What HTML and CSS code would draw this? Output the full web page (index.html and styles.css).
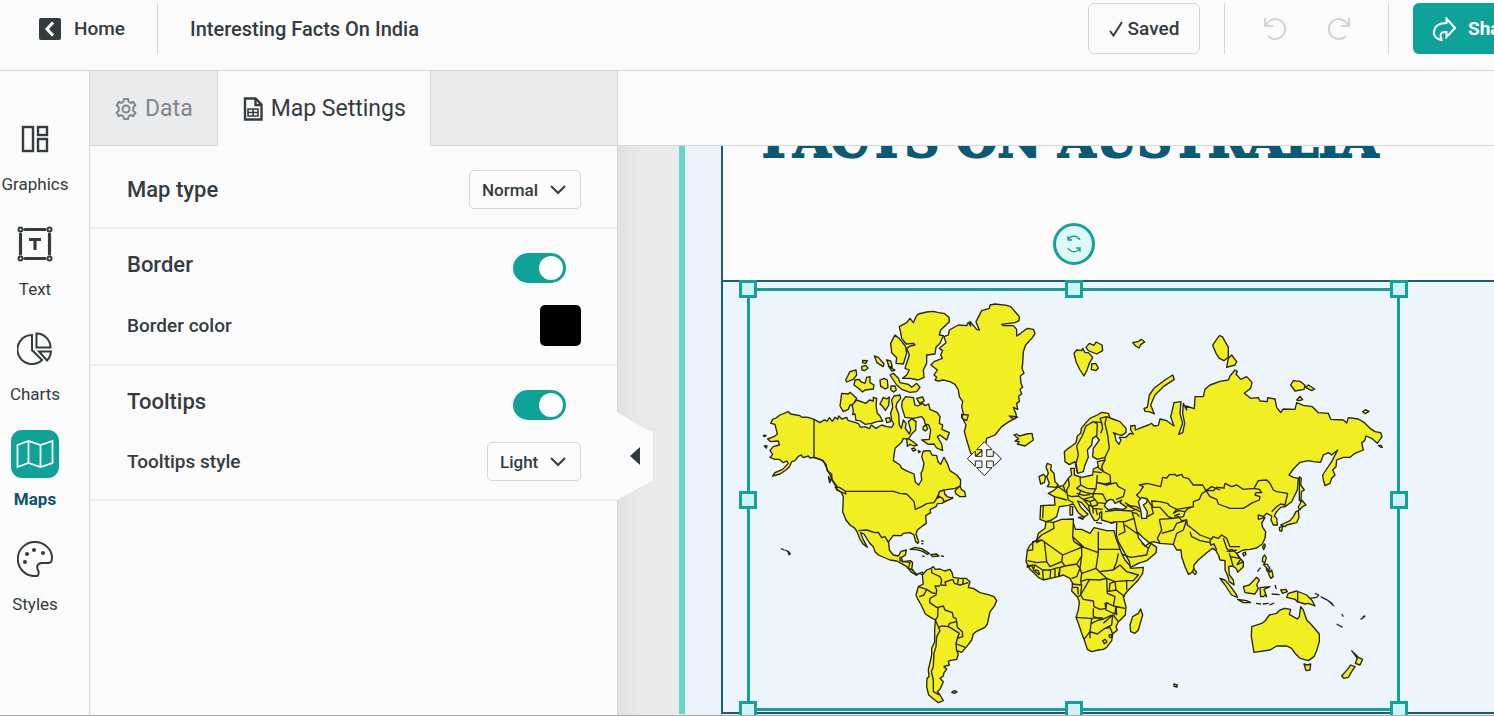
FILE: index.html
```html
<!DOCTYPE html>
<html lang="en">
<head>
  <meta charset="utf-8">
  <title>Interesting Facts On India</title>
  <link rel="stylesheet" href="styles.css">
</head>
<body>

<!-- Top bar -->
<header class="topbar">
  <a class="home" href="#">
    <svg width="22" height="22" viewBox="0 0 22 22"><rect width="22" height="22" rx="2" fill="#343c3f"/><path d="M14 4.500L8 11l6 6.500" fill="none" stroke="#fff" stroke-width="3"/></svg>
    Home
  </a>
  <span class="divider"></span>
  <span class="doc-title">Interesting Facts On India</span>
  <div class="actions">
    <button class="saved"><svg width="14" height="16" viewBox="0 0 14 16"><path d="M1 10l3.500 4.500L13 1" fill="none" stroke="currentColor" stroke-width="2"/></svg>Saved</button>
    <span class="divider"></span>
    <div class="history">
      <button class="icon-btn" aria-label="Undo"><svg width="24" height="24" viewBox="0 0 24 24"><path d="M2 1v8h8M3 8a10 10 0 1 1 2 11" /></svg></button>
      <button class="icon-btn" aria-label="Redo"><svg width="24" height="24" viewBox="0 0 24 24"><path d="M22 1v8h-8M21 8a10 10 0 1 0-2 11" /></svg></button>
    </div>
    <span class="divider"></span>
    <button class="share"><svg width="24" height="24" viewBox="0 0 24 24"><path d="M14.500 1.500l8.500 9.500-8.500 9v-5c-4-.5-6 1-6 4l1 4C4 22 1 18 2 14c1-5 5-8 12.500-8z"/></svg>Share</button>
  </div>
</header>

<main class="editor">
  <!-- Tool sidebar -->
  <nav class="sidebar">
    <a class="tool" href="#">
      <span class="tool-icon"><svg width="36" height="36" viewBox="0 0 36 36" stroke-width="2.400"><rect x="6" y="6" width="10" height="24"/><rect x="21" y="6" width="9" height="8"/><rect x="21" y="18" width="9" height="12"/></svg></span>
      Graphics
    </a>
    <a class="tool" href="#">
      <span class="tool-icon"><svg width="36" height="36" viewBox="0 0 36 36" stroke-width="3.200"><path d="M8 3.500h20M8 32.500h20M3.500 8v20M32.500 8v20" stroke-linecap="round"/><g stroke-width="2" fill="#fbfbfb"><circle cx="3.500" cy="3.500" r="2"/><circle cx="32.500" cy="3.500" r="2"/><circle cx="3.500" cy="32.500" r="2"/><circle cx="32.500" cy="32.500" r="2"/></g><path d="M12 13.500h12M18 13v11"/></svg></span>
      Text
    </a>
    <a class="tool" href="#">
      <span class="tool-icon"><svg width="36" height="36" viewBox="0 0 36 36" stroke-width="2"><path d="M15 4A14.500 14.500 0 1 0 25 29L15 19z"/><path d="M19.500 2.500a14 14 0 0 1 14 14h-14zM22 20.500h12a14 14 0 0 1-4 9z"/></svg></span>
      Charts
    </a>
    <a class="tool active" href="#">
      <span class="tool-icon"><svg width="38" height="30" viewBox="0 0 38 30" stroke-width="1.800"><path d="M1.500 6l11-4 12 4 12-4v22l-12 4-12-4-11 4zM12.500 2v22M24.500 6v22"/></svg></span>
      Maps
    </a>
    <a class="tool" href="#">
      <span class="tool-icon"><svg width="36" height="36" viewBox="0 0 36 36" stroke-width="2"><path d="M20 35C8 36 .8 27 .8 18A17 17 0 0 1 18 1c9 0 17 7 17 16 0 5-2 5-5 5h-5c-4 0-6 3-4 7 1 2 1 5-1 6z"/><g fill="#343c3f" stroke="none"><circle cx="8" cy="21" r="2"/><circle cx="10" cy="13" r="2"/><circle cx="17" cy="9" r="2"/><circle cx="26" cy="12" r="2"/></g></svg></span>
      Styles
    </a>
  </nav>

  <!-- Map settings -->
  <aside class="panel">
    <div class="tabs">
      <button class="tab"><svg width="22" height="22" viewBox="0 0 22 22"><path d="M9 1h4l.6 2.700 2 1.100L18.300 4l2 3.400-2 1.900v3.400l2 1.900-2 3.400-2.700-.8-2 1.100L13 21H9l-.6-2.700-2-1.100-2.700.8-2-3.400 2-1.900V9.300l-2-1.900L3.700 4l2.700.8 2-1.100z"/><circle cx="11" cy="11" r="3.500"/></svg>Data</button>
      <button class="tab active"><svg width="20" height="24" viewBox="0 0 20 24"><path d="M2 1.500h10.500l6 6v15H2zM12.500 2v6h6"/><path d="M5 12h10v7H5zM5 15.500h10M10 12v7" stroke-width="1.600"/></svg>Map Settings</button>
    </div>
    <section class="group">
      <div class="row">
        <label class="title" for="mapType">Map type</label>
        <span class="select normal">
          <select id="mapType"><option>Normal</option><option>Satellite</option></select>
          <svg width="16" height="10" viewBox="0 0 16 10"><path d="M1 1l7 7 7-7"/></svg>
        </span>
      </div>
    </section>
    <section class="group">
      <div class="row switch-row">
        <label class="title" for="border">Border</label>
        <input class="switch" type="checkbox" id="border" checked>
      </div>
      <div class="row">
        <label for="borderColor">Border color</label>
        <input class="swatch" type="color" id="borderColor" value="#000000">
      </div>
    </section>
    <section class="group">
      <div class="row switch-row">
        <label class="title" for="tooltips">Tooltips</label>
        <input class="switch" type="checkbox" id="tooltips" checked>
      </div>
      <div class="row">
        <label for="tooltipStyle">Tooltips style</label>
        <span class="select light">
          <select id="tooltipStyle"><option>Light</option><option>Dark</option></select>
          <svg width="16" height="10" viewBox="0 0 16 10"><path d="M1 1l7 7 7-7"/></svg>
        </span>
      </div>
    </section>
    <button class="collapse" aria-label="Collapse panel"><svg width="10" height="18" viewBox="0 0 10 18"><path d="M10 0v18L0 9z" fill="#343c3f"/></svg></button>
  </aside>

  <!-- Canvas -->
  <div class="canvas">
    <div class="canvas-bar"></div>
    <div class="workspace">
      <div class="sheet">
        <div class="sheet-head"><h1>FACTS ON AUSTRALIA</h1></div>
        <div class="sheet-map">
          <div class="selection">
            <svg class="map" viewBox="2241 864 1959 1269">
              <g class="land">
                <!-- North America, Greenland, Iceland -->
                <g transform="translate(2220 870)">
                  <path d="M105 403L92 400 98 388 108 384 120 375 145 365 152 372 180 377 185 381 205 382 222 388 240 398 252 390 262 393 268 383 277 394 285 382 293 388 296 378 306 387 320 382 324 391 345 397 355 401 362 412 375 410 388 416 394 405 408 415 425 405 440 410 455 412 461 402 455 390 452 370 458 352 455 330 462 318 480 315 482 325 470 340 468 352 476 372 478 405 484 415 490 390 498 400 496 415 508 432 512 420 505 395 515 386 528 395 527 420 515 432 505 448 490 445 485 457 465 475 460 512 480 525 485 535 505 545 522 552 526 576 536 585 545 570 543 550 548 540 552 520 545 500 550 483 570 482 576 495 590 497 594 515 602 523 612 502 622 520 630 542 650 555 662 570 661 588 645 595 620 599 600 604 590 625 602 612 618 615 614 626 638 622 625 630 605 640 592 641 588 650 570 659 572 668 557 677 559 700 550 706 532 720 528 732 536 755 534 760 527 755 522 735 510 728 490 730 484 737 460 736 446 755 448 780 460 795 475 798 483 784 499 780 496 795 484 803 488 815 512 812 518 818 515 838 530 853 548 846 549 855 538 850 530 856 512 845 500 830 485 821 470 813 450 810 415 795 405 785 400 770 388 758 372 732 362 728 368 745 382 772 370 763 360 748 352 727 345 715 330 705 318 690 308 665 310 620 303 606 290 600 288 590 276 570 275 552 262 543 258 523 245 510 222 502 210 504 205 498 190 503 183 495 174 500 165 512 155 515 148 530 138 540 120 552 98 558 105 548 128 538 145 520 140 513 130 518 118 508 105 508 90 502 98 493 90 482 100 470 118 465 115 453 92 455 83 447 102 440 112 432z"/>
                  <path class="line" d="M222 388V502L250 512 265 545 280 575 295 594 310 604H460L480 610 500 612 510 622 522 635 526 658 545 650 560 641 582 638 590 625 602 620M355 722L380 720 405 728 415 727 425 743 435 740 445 757M480 800V812L490 815 510 817 505 835 520 840"/>
                  <path d="M285 592L298 592 315 603 318 612 300 605zM265 560l8 10-4 8zM645 602L660 588 664 598 674 605 677 620 660 620 648 612zM598 605L612 600 614 612 622 620 638 625 612 635 608 625 595 618z"/>
                  <path d="M718 120L708 95 725 62 748 55 750 45 765 42 800 46 812 50 838 80 837 92 825 98 785 103 790 107 820 107 830 118 830 138 842 130 862 115 880 118 885 130 878 142 857 165 850 185 848 220 846 235 852 250 841 258 843 280 848 292 840 298 845 312 836 318 838 335 830 340 833 358 820 352 829 375 826 385 808 394 785 410 765 435 740 445 735 475 705 500 692 490 680 450 673 425 678 405 666 382 670 370 665 350 668 335 658 320 655 300 645 283 630 275 610 270 595 273 585 270 590 262 582 255 592 240 573 225 582 215 607 205 602 195 608 182 598 175 618 158 612 140 625 135 628 120 655 105 680 107 685 97 692 108 690 94 710 118zM665 373l20 2-5 17-15-8zM808 378l25 3-13 7z"/>
                  <path d="M478 110L500 98 510 85 520 98 528 80 535 72 560 66 580 64 595 68 612 70 627 82 628 95 602 120 598 135 610 137 600 160 588 172 585 192 560 195 560 220 550 240 552 262 535 270 510 265 488 265 500 255 508 240 495 235 498 225 508 195 500 175 510 168 525 165 520 160 498 162 485 145 482 128z"/>
                  <path d="M452 160L458 148 465 135 480 148 497 170 500 190 490 222 468 220 470 203 455 188zM450 255L460 250 475 265 480 278 505 283 515 292 530 280 540 292 530 305 510 307 485 298 470 285zM420 270l12-5 10 5 2 22-8 5-14-8zM453 288l12 0 4 12-8 6-9-7zM440 210l12 3 5 18-10-2zM445 228l12 8 8 4-10 3zM403 198l12 4 17 20-3 8-18-12zM368 211l14 1-5 8-9-2zM365 230l12-4 7 8-10 8-8-2zM317 270L330 245 348 240 350 255 340 268 320 276zM342 285L345 270 358 268 362 275 375 280 380 262 390 260 390 278 402 285 400 297 375 300 368 306 355 295z"/>
                  <path d="M305 310L325 312 330 307 350 325 338 345 330 345 325 358 310 365 300 348zM336 345L350 330 378 340 388 330 400 333 400 322 410 325 408 348 412 370 420 378 428 393 410 395 395 400 375 403 360 392 348 391 345 372 338 374 340 362zM420 342l10-20 10 5 8-6-2 25-10 15-8-12zM437 385l12-2 3 12-12 3z"/>
                  <path d="M485 350L487 333 497 320 520 323 525 345 533 348 548 340 555 347 566 342 570 358 592 368 600 380 598 400 608 405 606 418 628 428 620 450 600 435 592 440 605 462 608 482 590 474 582 462 565 463 545 450 568 448 572 420 566 405 555 402 553 390 545 380 520 385 495 382zM530 325l18-4 5 12-14 7zM550 410l8-5 5 12-7 6-7-5zM500 445l12 5 20 15-10 3-12-5-8 6zM515 476l8-2 4 7-8 2zM535 482l6 3-5 3z"/>
                  <path d="M822 435L830 432 838 438 850 435 860 432 876 430 880 450 855 468 832 462 838 455 825 453 836 446zM70 437l4-2 4 2-5 3zM73 468l8-1-2 7z"/>
                </g>
                <!-- South America and the Caribbean -->
                <g transform="translate(2220 1440)">
                  <path d="M123 206l10 4M134 210l12 5 5 7-4 2-3-8M510 208L525 202 545 206 568 220 562 223 548 214 530 209zM572 224L590 222 597 228 578 230zM547 228l7 2M603 228l9 1M543 182l8 2M544 190l6 2"/>
                  <path d="M548 295L547 285 560 270 573 265 580 260 586 268 600 267 614 273 630 268 636 278 640 292 660 295 678 295 690 305 685 323 700 325 720 338 745 344 762 350 770 362 762 380 750 395 742 432 735 442 708 455 700 462 695 480 680 500 665 517 650 512 655 522 650 538 632 541 625 544 628 555 612 560 620 568 612 578 610 588 600 595 610 605 600 628 592 635 600 645 610 662 595 668 580 656 566 645 560 620 561 595 567 590 565 570 575 525 575 505 584 485 584 450 586 420 572 412 556 402 545 378 532 355 528 345 535 320 550 312z"/>
                  <path class="line" d="M575 268L575 278 583 282 600 290 605 300 602 315 618 316 615 306 638 298M600 318L585 318 590 330 588 345 570 355 569 368 590 382 594 382 593 410 586 420 595 440 600 452 590 470 588 500 582 520 580 560 574 575 580 600 580 635 598 645M535 320L560 328 575 338 586 340M560 328L552 345 538 350M594 382L610 378 615 390 637 398 640 412 648 415 650 425 652 442 667 455 668 470 652 475 658 460 635 445 625 440 628 430 650 425M597 442L605 438 625 440M652 475L648 492 650 512M650 492L670 500 675 502M638 298L643 310 660 315 685 308M655 296L653 310M670 296L668 314"/>
                  <path d="M635 637l8-5 8 3-7 5z"/>
                </g>
                <!-- Europe and Asia -->
                <g transform="translate(3030 960)">
                  <path d="M203 460L198 442 195 425 178 434 165 425 163 395 175 385 185 378 198 368 202 348 212 340 214 325 228 308 240 295 262 285 275 277 295 280 300 294 330 305 348 325 348 338 335 346 325 344 310 338 315 345 318 362 327 373 333 360 328 352 348 352 360 340 370 342 362 330 362 318 375 316 376 330 388 325 415 315 425 310 432 318 445 316 450 297 470 302 492 318 482 290 487 270 492 248 513 245 510 280 518 310 506 343 518 338 524 310 518 280 520 250 530 270 528 258 553 266 555 230 580 230 585 208 600 195 630 184 655 180 660 168 675 150 682 155 678 162 692 178 710 170 726 187 722 205 703 220 722 235 745 233 750 243 772 245 773 233 795 237 800 262 812 278 820 267 855 268 860 248 880 256 907 260 925 278 955 280 962 298 1000 300 1010 309 1015 293 1045 297 1062 307 1080 325 1095 335 1112 338 1116 350 1102 370 1085 355 1068 348 1064 362 1055 368 1060 390 1035 400 1020 412 1000 412 980 420 978 440 968 450 975 465 965 475 960 490 945 497 940 480 938 465 948 450 965 425 983 390 965 405 955 398 940 405 932 427 910 425 895 422 870 427 850 447 837 465 850 472 865 475 862 510 845 545 825 560 812 562 800 575 793 588 800 595 802 615 790 615 783 600 785 588 770 580 760 590 745 585 745 598 765 592 755 610 758 622 767 635 765 655 757 672 740 684 720 688 700 690 680 700 690 715 700 725 700 740 683 757 680 748 675 742 665 738 656 740 658 765 670 780 672 795 658 785 652 765 645 750 645 722 630 720 625 705 618 692 608 685 592 697 565 720 552 735 550 755 535 763 525 740 515 710 513 690 500 690 490 673 450 670 430 665 418 668 398 652 383 637 385 653 405 678 420 668 440 682 438 698 410 722 385 730 362 742 358 725 340 692 325 665 319 645 320 605 302 608 275 600 275 575 268 580 270 592 262 602 253 602 238 575 215 548 203 543 212 562 234 583 222 592 205 578 190 552 175 556 148 560 140 590 125 600 108 605 90 598 92 557 135 555 133 530 115 520 130 512 145 500 160 497 175 475 185 465 182 445 193 445 193 465 215 472 248 465 250 447 265 440 262 425 285 420 285 412 262 418 248 410 250 385 268 360 258 348 248 355 245 375 232 390 235 412 225 435 220 455z"/>
                  <path class="line" d="M203 460L198 430 205 405 200 378 218 345 228 318 250 305 262 312 260 348M250 305L275 308 270 295 290 290 300 294M275 308L278 325 272 340M290 290L285 310 293 345 298 385 285 412M285 420L275 440 280 455 300 465 302 488 285 492 260 487M250 455L275 458M262 440L280 455M175 475L178 495 170 510 172 525 185 530 205 528 212 512 200 505 212 495 210 470M212 495L232 505 258 507 260 487 262 465M260 487L290 495 318 488 325 500 345 510 340 530 318 538M258 507L248 522 228 518 212 512M205 528L220 538 248 530 252 520 278 522 290 545M172 525L175 540 190 548M220 538L235 555 248 560 250 580M248 530L262 548 285 550M235 555L240 575M250 565L278 568M225 540L240 545 255 538M240 545L245 560 262 555 262 548M258 568L262 585M200 520L222 526 240 524M133 530L170 540M100 558L98 595M145 500L172 520M160 497L165 512M285 575L320 570 365 573 378 568 390 575M345 548L362 558 380 560 388 566M368 578L380 580 388 590M365 573L372 595 345 605 322 605M350 555L375 568M390 515L400 500 388 495 412 490 452 500 458 472 470 474 478 464 495 463 500 468 515 463 520 472 535 475 550 495 578 495 588 512 575 522 568 538 550 545 550 560 500 568 480 558 472 550 450 545 425 543 428 562 410 535 390 535 380 525 390 515M588 512L605 500 630 510M412 590L430 580 425 562 450 562 475 590 490 595M550 560L535 565 525 575 520 590 490 595 448 598M500 568L490 580 505 572 525 575M492 588L510 582M588 512L600 530 620 538 625 552 660 565 700 565 728 548 748 540 750 530 735 525 738 518 755 518 748 508 732 505 700 508 680 495 665 500 645 490 642 504 620 502 610 512 588 512M732 505L745 482 770 480 780 490 790 510 800 515 833 520 825 555 812 552 800 560 785 575M372 595L382 640M340 605L345 635 325 645M345 615L383 642M448 598L455 630 442 655 450 670M455 640L490 630 500 610 530 600M490 595L505 590 515 602 530 600 532 615 545 625 570 645 605 658 608 650 625 655 635 645 650 655 660 680 690 680M540 635L545 650 570 662 600 668M500 640L490 673M530 600L520 630 500 640M600 660L602 675 612 672 620 690M640 655L650 685 660 695 680 690M658 700L670 740M660 710L690 715M650 695L665 688 680 700 692 718 680 735M680 735L700 725M330 700L362 712 410 705 415 685M395 670L415 685 425 668"/>
                  <path class="sea" d="M283 558L290 545 300 538 310 540 315 550 335 540 330 548 350 562 340 568 315 565 295 570zM385 545L395 532 412 538 410 548 400 555 412 575 410 595 395 595 393 575z"/>
                  <!-- islands -->
                  <path d="M108 440L112 430 124 435 122 450 132 460 135 485 145 495 138 502 112 500 118 490 110 470 115 460zM87 470L100 463 107 470 103 488 92 492zM180 560h8v25h-8zM205 592l18-2-5 8zM258 608l18 2M300 610l14-2M192 100L200 90 215 92 218 85 225 98 235 98 248 112 238 130 232 148 222 168 210 150 198 125zM228 82L238 70 252 76 258 66 276 75 278 92 260 102 245 96 235 92zM245 132l12-2 8 14-8 8-13-4zM368 68l18-4 8-6 10 8-12 8-5 10-10-6zM402 265L412 262 418 225 432 205 465 180 488 165 493 178 460 200 435 225 422 255 433 282 418 275 405 274z"/>
                  <path d="M608 76L615 65 628 47 637 50 655 82 655 112 642 122 628 115 618 100zM650 142L655 115 665 105 680 125 675 135zM842 195L850 182 870 184 885 196 882 208 855 213zM887 202L895 195 914 207 905 212zM860 240l10-11 8 10-10 3zM1058 275l8-6 11 5-11 7zM1105 376l8 0 4 6-6-1z"/>
                  <path d="M868 470L874 475 872 495 883 510 874 515 873 545 868 540zM870 552L875 540 888 555 878 560 868 570 865 560zM865 572L867 592 860 608 830 615 825 620 812 615 840 602 850 590 858 575zM808 622l10-3-3 15-6-2zM758 680l6-8 2 5-5 12zM698 700l8-4 2 7-7 5zM547 755l5-8 8 10-5 7zM758 713l6-8 5 8-5 17-7-6zM760 733l12 0 8 12-5 5zM768 742l10 10-6 3zM742 755l10-12M775 760l10-10 5 20-8 5zM630 775L645 780 662 800 680 825 682 832 665 825 645 795zM683 838L710 842 722 848 700 848zM738 850l15 2M758 852l18-2M778 855l15-6M700 800L718 795 740 772 748 780 740 795 745 805 735 822 705 818zM750 803L780 800 762 808 770 830 765 825 760 830 752 830zM795 795l4 12M785 822l24 2M812 810L828 808 832 815 818 820zM830 832L835 820 860 813 890 825 905 840 915 858 895 850 885 852 862 845 855 838z"/>
                  <path class="line" d="M863 815V848M900 835L920 832 926 825 915 820M932 830L955 842 972 858M960 845L968 853M995 882l5 8M980 912l18 10M1052 898l14-10M1058 890l8-2"/>
                  <path d="M725 920L755 910 765 903 778 885 800 880 810 870 825 865 842 868 838 883 862 897 868 890 872 860 880 870 890 900 905 915 928 942 928 965 920 992 912 1010 895 1022 870 1015 855 1000 845 985 830 978 800 978 780 990 732 997 724 950zM882 1032L892 1035 902 1032 900 1050 888 1052zM1025 992L1045 1012 1058 1018 1050 1035 1036 1030 1042 1015zM1022 1035L1035 1040 1025 1055 1015 1072 1002 1075 995 1068 1015 1045zM492 1092l10 3-1 6-9-2z"/>
                </g>
                <!-- Africa -->
                <g transform="translate(3030 1470)">
                  <path d="M108 95L130 97 155 88 190 87 190 98 196 118 215 118 240 130 252 113 290 122 312 122 318 145 335 190 345 210 358 225 362 235 400 232 398 250 385 270 370 285 348 308 340 320 348 350 346 375 325 395 318 410 322 420 308 432 305 452 290 472 280 478 265 480 245 485 232 478 222 448 215 430 205 400 198 382 205 360 208 335 202 320 185 303 188 280 180 265 160 255 145 260 120 265 100 270 85 262 68 245 60 238 48 215 52 180 60 165 80 150 85 130 105 115z"/>
                  <path class="line" d="M130 97L132 115 95 135 80 150 80 158 95 150 158 195 220 170 188 140 190 98M188 140L192 155 215 170 265 188V125M265 178H330M95 150L68 155V180L52 182M103 155L110 215 80 218 52 212M158 195L155 215 120 230 110 215M155 215L165 228 200 222 215 198V175M265 188L258 235 268 245 310 240 320 215 325 190M215 198L210 235 215 250 258 235M200 222L210 235 200 260 185 265M145 260L150 232 165 228M120 265L122 240 135 235V262M100 270L98 240 122 240M75 225L98 240M50 228L75 225 70 240 88 255M215 250L212 275 230 268 268 270 290 265 268 245M185 282L215 285 212 275M215 285L212 315 235 275 240 268M205 320L212 315 220 328 250 333 252 350 270 358 288 355 290 338 310 348 315 320 292 310 290 265M290 265L315 275 350 272 370 272 385 255 350 245 330 225 310 240M315 275L318 300 345 320M315 275L300 280 297 305M350 272V300M318 300L292 305M310 348L345 355M285 338L288 360 315 372 320 350M250 355V380L278 388 305 375M198 382L240 385 278 383M245 387L240 425 222 448M240 445L240 425 262 432 285 415 300 412 308 432M278 388L265 390 245 400M280 400L308 375 305 405 285 415M325 395L310 375M278 452l8-4 5 8-8 5zM297 435l8-1 1 8-7 0zM318 350l2 24-5-4zM50 232l15-5 5 10M135 235L150 232 148 258M75 240l10 2 4 12M188 292l15 0 2 22"/>
                  <path d="M392 357L398 375 385 420 375 430 362 425 360 405 368 380 385 370z"/>
                </g>
              </g>
              <!-- move cursor -->
              <path class="cursor" transform="translate(2953 1376)" d="M0-51L23-27H7V-7H27V-23L51 0 27 23V7H7V27H23L0 51-23 27H-7V7H-27V23L-51 0-27-23V-7H-7V-27H-23z"/>
            </svg>
            <button class="rotate" aria-label="Rotate"><svg width="16" height="18" viewBox="0 0 16 18"><path d="M2 5c3-5 9-5 12 0M2 1v4h4M14 13c-3 5-9 5-12 0M14 17v-4h-4"/></svg></button>
            <i class="handle top left"></i><i class="handle top center"></i><i class="handle top right"></i>
            <i class="handle middle left"></i><i class="handle middle right"></i>
            <i class="handle bottom left"></i><i class="handle bottom center"></i><i class="handle bottom right"></i>
          </div>
        </div>
      </div>
    </div>
  </div>
</main>

</body>
</html>
```
FILE: styles.css
```css
* { box-sizing: border-box; }
body {
  margin: 0; height: 100vh; display: flex; flex-direction: column; overflow: hidden;
  font-family: Roboto, "Liberation Sans", sans-serif; color: #343c3f; background: #fbfbfb;
  border-bottom: 1px solid #a8abad;
}
a { color: inherit; text-decoration: none; }
button { font: inherit; color: inherit; background: none; border: 0; padding: 0; }
svg { fill: none; flex: none; }

/* Top bar */
.topbar {
  display: flex; align-items: center; height: 71px; flex: none; overflow: hidden;
  padding: 3px 0 16px 39px; border-bottom: 1px solid #d5d8da; font-size: 19px; font-weight: 500;
}
.home { display: flex; align-items: center; gap: 13px; margin-right: 32px; }
.divider { width: 1px; height: 51px; background: #d5d8da; }
.doc-title { margin-left: 32px; font-size: 20px; white-space: nowrap; }
.actions { display: flex; align-items: center; gap: 24px; margin-left: auto; margin-right: -56px; }
.saved {
  display: flex; align-items: center; justify-content: center; gap: 5px;
  width: 112px; height: 51px; border: 1px solid #d5d8da; border-radius: 6px;
}
.history { display: flex; gap: 40px; width: 115px; justify-content: center; }
.icon-btn { display: flex; stroke: #d3d5d6; stroke-width: 2; }
.share {
  display: flex; align-items: center; gap: 12px; width: 137px; height: 51px; padding-left: 19px;
  border-radius: 6px; background: #0fa298; color: #fff; stroke: #fff; stroke-width: 2; font-weight: 700;
}

/* Tool sidebar */
.editor { display: flex; flex: 1; min-height: 0; }
.sidebar {
  display: flex; flex-direction: column; gap: 26px; width: 90px; flex: none;
  padding: 44px 19px 0 0; border-right: 1px solid #d5d8da;
}
.tool {
  display: flex; flex-direction: column; align-items: center; gap: 11px;
  font-size: 17px; line-height: 20px; stroke: #343c3f;
}
.tool-icon { display: flex; align-items: center; justify-content: center; width: 48px; height: 48px; border-radius: 11px; }
.tool.active { color: #0b536b; font-weight: 700; stroke: #fff; }
.tool.active .tool-icon { background: #0fa298; }

/* Settings panel */
.panel { position: relative; z-index: 1; width: 528px; flex: none; border-right: 1px solid #d5d8da; background: #fbfbfc; }
.tabs { display: flex; height: 75px; background: #eaebec; box-shadow: inset 0 -1px #d5d8da; }
.tab {
  display: flex; align-items: center; gap: 8px; padding: 0 24px 0 25px;
  border-right: 1px solid #d5d8da; color: #80878a; font-size: 23px; stroke: #80878a; stroke-width: 2;
  box-shadow: inset 0 -1px #d5d8da;
}
.tab.active { background: #fbfbfc; color: #343c3f; stroke: #343c3f; stroke-width: 2.4; box-shadow: none; }
.group {
  display: flex; flex-direction: column; gap: 22px;
  padding: 24px 36px 18px 37px; border-bottom: 2px solid #ececee;
}
.row { display: flex; justify-content: space-between; align-items: center; font-size: 19px; font-weight: 500; }
.switch-row { align-items: flex-start; padding-right: 15px; }
.title { font-size: 22px; line-height: 24px; }
.select { position: relative; height: 39px; }
.select select {
  appearance: none; width: 100%; height: 100%; padding: 0 12px; border: 1px solid #d5d8da; border-radius: 5px;
  background: #fcfcfc; color: #343c3f; font: 500 17px Roboto, sans-serif;
}
.select svg { position: absolute; right: 15px; top: 15px; stroke: #343c3f; stroke-width: 2; pointer-events: none; }
.normal { width: 112px; }
.light { width: 94px; }
.switch { appearance: none; display: flex; width: 53px; height: 30px; margin: 0; padding: 3px; border-radius: 15px; background: #0fa298; }
.switch::before { content: ""; width: 24px; height: 24px; border-radius: 50%; background: #fff; }
.switch:checked { justify-content: flex-end; }
.swatch { appearance: none; width: 41px; height: 41px; padding: 0; border: 0; border-radius: 5px; overflow: hidden; background: #000; }
.swatch::-webkit-color-swatch-wrapper { padding: 0; }
.swatch::-webkit-color-swatch { border: 0; }
.collapse {
  position: absolute; left: 100%; top: 341px; width: 36px; height: 88px;
  display: flex; align-items: center; justify-content: center; background: #fbfbfc;
  clip-path: polygon(0 0, 30px 18px, 100% 20px, 100% 68px, 0 100%);
}

/* Canvas */
.canvas { flex: 1; min-width: 0; display: flex; flex-direction: column; }
.canvas-bar { height: 75px; flex: none; border-bottom: 1px solid #d5d8da; }
.workspace { flex: 1; min-height: 0; overflow: hidden; padding-left: 61px; background: linear-gradient(90deg, #dfe1e2, #e8e9eb 20px, #eaebed 61px); }
.sheet { border-left: 6px solid #68d3c8; padding-left: 36px; background: linear-gradient(#ebf4f8, #ebf3fc 60px); }
.sheet-head { border: solid #17607b; border-width: 0 0 2px 2px; padding: 0 0 110px 39px; background: #fbfbfc; }
.sheet-head h1 {
  margin: -36px 0 0; font: bold 48px/60px "DejaVu Serif", serif; color: #0b5a75; white-space: nowrap;
  -webkit-text-stroke: 2px #0b5a75;
}
.sheet-map { position: relative; height: 432px; border: solid #17607b; border-width: 0 0 2px 2px; background: #edf4fb; }
.selection { position: absolute; left: 24px; top: 6px; width: 653px; height: 423px; border: 3px solid #12a29a; }
.map { display: block; width: 653px; height: 423px; margin: -3px; }
.land { fill: #f1ee22; stroke: #26260f; stroke-width: 4; stroke-linejoin: round; }
.line { fill: none; }
.sea { fill: #edf4fb; }
.cursor { fill: #fff; stroke: #222; stroke-width: 3; }
.rotate {
  position: absolute; left: calc(50% - 21px); top: -68px; width: 42px; height: 42px;
  display: flex; align-items: center; justify-content: center;
  border: 3px solid #12a29a; border-radius: 50%; background: #dff9fa; stroke: #12a29a; stroke-width: 1.4;
}
.handle { position: absolute; width: 18px; height: 18px; border: 3px solid #12a29a; background: #d0f1f8; }
.top { top: -11px; }
.middle { top: calc(50% - 9px); }
.bottom { bottom: -11px; }
.left { left: -11px; }
.center { left: calc(50% - 9px); }
.right { right: -11px; }
```
